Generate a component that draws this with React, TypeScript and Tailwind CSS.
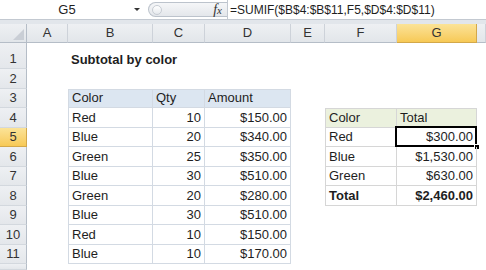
import React from 'react';

type CellDef = {
  t: string;
  right?: boolean;
  bold?: boolean;
  tbl?: 1 | 2;
  head?: boolean;
  top?: boolean;
  left?: boolean;
  sel?: boolean;
};

const COLS = ['A', 'B', 'C', 'D', 'E', 'F', 'G', 'H'];

// sheet contents keyed by row number, then column letter
const sheet: Record<number, Record<string, CellDef>> = {
  1: { B: { t: 'Subtotal by color', bold: true } },
  3: {
    B: { t: 'Color', tbl: 1, head: true, top: true, left: true },
    C: { t: 'Qty', tbl: 1, head: true, top: true },
    D: { t: 'Amount', tbl: 1, head: true, top: true },
  },
  4: {
    B: { t: 'Red', tbl: 1, left: true },
    C: { t: '10', tbl: 1, right: true },
    D: { t: '$150.00', tbl: 1, right: true },
    F: { t: 'Color', tbl: 2, head: true, top: true, left: true },
    G: { t: 'Total', tbl: 2, head: true, top: true },
  },
  5: {
    B: { t: 'Blue', tbl: 1, left: true },
    C: { t: '20', tbl: 1, right: true },
    D: { t: '$340.00', tbl: 1, right: true },
    F: { t: 'Red', tbl: 2, left: true },
    G: { t: '$300.00', tbl: 2, right: true, sel: true },
  },
  6: {
    B: { t: 'Green', tbl: 1, left: true },
    C: { t: '25', tbl: 1, right: true },
    D: { t: '$350.00', tbl: 1, right: true },
    F: { t: 'Blue', tbl: 2, left: true },
    G: { t: '$1,530.00', tbl: 2, right: true },
  },
  7: {
    B: { t: 'Blue', tbl: 1, left: true },
    C: { t: '30', tbl: 1, right: true },
    D: { t: '$510.00', tbl: 1, right: true },
    F: { t: 'Green', tbl: 2, left: true },
    G: { t: '$630.00', tbl: 2, right: true },
  },
  8: {
    B: { t: 'Green', tbl: 1, left: true },
    C: { t: '20', tbl: 1, right: true },
    D: { t: '$280.00', tbl: 1, right: true },
    F: { t: 'Total', tbl: 2, left: true, bold: true },
    G: { t: '$2,460.00', tbl: 2, right: true, bold: true },
  },
  9: {
    B: { t: 'Blue', tbl: 1, left: true },
    C: { t: '30', tbl: 1, right: true },
    D: { t: '$510.00', tbl: 1, right: true },
  },
  10: {
    B: { t: 'Red', tbl: 1, left: true },
    C: { t: '10', tbl: 1, right: true },
    D: { t: '$150.00', tbl: 1, right: true },
  },
  11: {
    B: { t: 'Blue', tbl: 1, left: true },
    C: { t: '10', tbl: 1, right: true },
    D: { t: '$170.00', tbl: 1, right: true },
  },
};

const cellClass = (c?: CellDef) => {
  let cls = 'relative flex items-end pb-[1px] px-[3px] whitespace-nowrap leading-[16px] text-[#1e1e1e]';
  if (!c) return cls;
  if (c.tbl === 1) cls += ' border-r border-b border-[#d3dae3]';
  if (c.tbl === 2) cls += ' border-r border-b border-[#d6d6d6]';
  if (c.left) cls += ' border-l';
  if (c.top) cls += ' border-t';
  if (c.head && c.tbl === 1) cls += ' bg-[#dce6f1]';
  if (c.head && c.tbl === 2) cls += ' bg-[#ebf1de]';
  if (c.right) cls += ' justify-end';
  if (c.bold) cls += ' font-bold';
  return cls;
};

const FormulaBar = () => (
  <div className="flex h-[20px] border-b border-[#c3c9d1] bg-white">
    <div className="flex w-[148px] items-center">
      <div className="flex w-[134px] justify-center text-[13px] leading-[16px] text-[#1e1e1e]">G5</div>
      <div className="h-0 w-0 border-x-[3px] border-t-[3px] border-x-transparent border-t-[#333]" />
    </div>
    <div className="my-[2px] flex w-[79px] items-center rounded-l-full border border-r-0 border-[#bcc3cc] bg-gradient-to-b from-[#f5f6f8] to-[#e4e7eb]">
      <div className="ml-[3px] h-[10px] w-[10px] rounded-full border border-[#c7ccd3] bg-gradient-to-b from-white to-[#e6e9ed]" />
      <div className="flex-1" />
      <span className="mr-[5px] font-['Liberation_Serif',serif] text-[14px] italic leading-[16px] text-[#333]">
        f<span className="text-[11px]">x</span>
      </span>
    </div>
    <div className="flex flex-1 items-center border-l border-[#c3c9d1] pl-[2px] text-[12px] leading-[16px] text-[#1e1e1e]">
      =SUMIF($B$4:$B$11,F5,$D$4:$D$11)
    </div>
  </div>
);

export default function App() {
  const rows = Array.from({ length: 12 }, (_, i) => i + 1);
  return (
    <div className="h-[270px] w-[486px] overflow-hidden bg-white font-['Liberation_Sans',Arial,sans-serif] text-[13px]">
      <FormulaBar />
      <div className="h-[4px] bg-[#e2e6eb]" />
      <div className="grid h-[246px] grid-cols-[27px_41px_85px_52px_86px_34px_72px_80px_1fr] grid-rows-[19px_26px_repeat(10,19.5px)_1fr]">
        {/* corner */}
        <div className="relative border-r border-b border-[#b5bdc7] bg-gradient-to-b from-[#eef0f3] to-[#e2e6ea]">
          <div className="absolute right-[2px] bottom-[2px] h-0 w-0 border-b-[11px] border-l-[11px] border-b-[#c9ced5] border-l-transparent" />
        </div>
        {COLS.map((col) =>
          col === 'G' ? (
            <div
              key={col}
              className="flex items-center justify-center border-r border-b border-[#d3a84a] bg-gradient-to-b from-[#fbe397] to-[#f7c955] leading-[16px] text-[#333]"
            >
              {col}
            </div>
          ) : (
            <div
              key={col}
              className="flex items-center justify-center border-r border-b border-r-[#cdd2d9] border-b-[#b5bdc7] bg-gradient-to-b from-[#eef0f3] to-[#e2e6ea] leading-[16px] text-[#333]"
            >
              {col === 'H' ? '' : col}
            </div>
          )
        )}
        {rows.map((r) => (
          <React.Fragment key={r}>
            {r === 5 ? (
              <div className="flex items-end justify-center border-r border-b border-[#d3a84a] bg-gradient-to-b from-[#fbe397] to-[#f7c955] pb-[1px] leading-[16px] text-[#333]">
                {r}
              </div>
            ) : (
              <div className="flex items-end justify-center border-r border-b border-r-[#b5bdc7] border-b-[#d3d8de] bg-gradient-to-b from-[#eef0f3] to-[#e4e7eb] pb-[1px] leading-[16px] text-[#333]">
                {r <= 11 ? r : ''}
              </div>
            )}
            {COLS.map((col) => {
              const c = sheet[r]?.[col];
              return (
                <div key={col} className={cellClass(c)}>
                  {c?.t}
                  {c?.sel && (
                    <>
                      <div className="pointer-events-none absolute -top-[2px] -left-[2px] -right-[1px] -bottom-[1px] border-[2px] border-black" />
                      <div className="absolute -right-[4px] -bottom-[4px] h-[6px] w-[6px] border border-white bg-black" />
                    </>
                  )}
                </div>
              );
            })}
          </React.Fragment>
        ))}
      </div>
    </div>
  );
}
